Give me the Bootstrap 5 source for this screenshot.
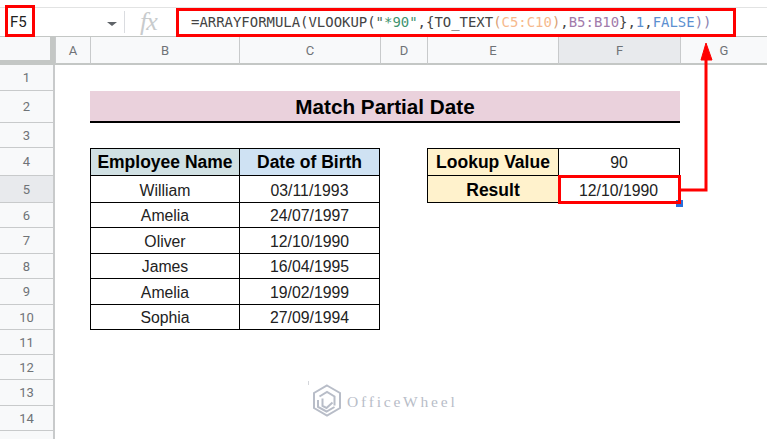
<!DOCTYPE html>
<html lang="en">
<head>
<meta charset="utf-8">
<title>Match Partial Date</title>
<link rel="stylesheet" href="https://cdn.jsdelivr.net/npm/bootstrap@5.3.0/dist/css/bootstrap.min.css">
<style>
html,body{margin:0;height:439px;overflow:hidden;background:#fff}
.sheet-app{position:relative;width:767px;height:439px;overflow:hidden;padding-top:7px;font-family:"Liberation Sans",Arial,sans-serif;color:#000}
.fbar{height:30px;border-top:1px solid #e2e3e3;border-bottom:1px solid #c4c7c5;background:#fff}
.namebox{width:125px;padding-left:10px;font:15px "Roboto",sans-serif;color:#222;border-right:1px solid #dadce0;height:22px}
.namebox .drop{width:0;height:0;border-left:5px solid transparent;border-right:5px solid transparent;border-top:4px solid #5f6368;margin-right:7px;margin-top:3px}
.fxbox{width:51px;font:italic 26px "Liberation Serif",serif;color:#c8cbcd;padding-left:15px;letter-spacing:-1px;line-height:1}
.ftext{font:13.95px "DejaVu Sans Mono",monospace;color:#444;padding-left:15px;white-space:pre}
.c-q{color:#4a6b5a}.c-str{color:#3f9470}.c-a{color:#f6b98d}.c-ap{color:#d9a074}.c-b{color:#a27bab}.c-n{color:#5b8fd0}.c-p{color:#8a7fb0}
.grid{table-layout:fixed;border-collapse:separate;border-spacing:0;width:767px}
.c0{width:55px}.c1{width:35px}.c2{width:149px}.c3{width:141px}.c4{width:47px}.c5{width:131px}.c6{width:122px}
.grid th{background:#f8f9fa;font:400 13px "Roboto",sans-serif;color:#6f7377;text-align:center;padding:0;vertical-align:middle;overflow:hidden}
.grid thead th{height:28px;border-bottom:2px solid #c4c7c5;border-left:1px solid #c8cacb}
.grid thead th.corner{border-left:0;border-right:5px solid #c4c7c5;border-bottom:5px solid #c4c7c5}
.grid tbody th{border-right:2px solid #c8cacb;border-bottom:1px solid #c8cacb}
.grid th.sel{background:#e8eaed}
.grid td{padding:2px 0 0;text-align:center;vertical-align:middle;font-size:15.8px;color:#222;overflow:hidden;white-space:nowrap;line-height:1}
.h25{height:25px}.h26{height:26px}.h27{height:27px}.h28{height:28px}.h32{height:32px}
.grid tr.h27 td{padding-top:4px}
.grid td.ttl{background:#ead1dc;border-bottom:2px solid #000;font-weight:700;font-size:20.7px;color:#000;padding-top:2px}
.grid td.bl{border-left:1px solid #000}
.grid td.br{border-right:1px solid #000}
.grid td.bt{border-top:1px solid #000}
.grid td.bb{border-bottom:1px solid #000}
.grid td.hd{font-weight:700;color:#000;font-size:17.5px}
.hd-g{background:#d0e0e3}
.hd-b{background:#cfe2f3}
.hd-y{background:#fff2cc}
.ovr{position:absolute;pointer-events:none}
.ovr-all{left:0;top:0}
.ovr-name{left:5px;top:5px;width:30px;height:32px;border:3px solid #f00}
.ovr-f{left:176px;top:8px;width:560px;height:29px;border:3px solid #f00}
.ovr-cell{left:558px;top:175px;width:123px;height:29px;border:3px solid #f00}
.handle{position:absolute;left:676px;top:200px;width:7px;height:7px;background:#2a6fdb}
.wm{position:absolute;left:312px;top:384px;display:flex;align-items:center;gap:5px;color:#b8bdc8;font:15.5px "Liberation Serif",serif;letter-spacing:2.8px}
.wm svg{flex:none}
.wm span{padding-top:2px}
.tick{position:absolute;left:308px;top:381px;width:1px;height:4px;background:#d4d6db}
</style>
</head>
<body>
<div class="sheet-app">
  <div class="fbar d-flex align-items-center">
    <div class="namebox d-flex align-items-center justify-content-between"><span>F5</span><span class="drop"></span></div>
    <div class="fxbox">fx</div>
    <div class="ftext flex-grow-1">=ARRAYFORMULA(VLOOKUP(<span class="c-q">"</span><span class="c-str">*90"</span>,{TO_TEXT<span class="c-ap">(</span><span class="c-a">C5:C10</span><span class="c-ap">)</span>,<span class="c-b">B5:B10</span>},<span class="c-n">1</span>,<span class="c-n">FALSE</span><span class="c-p">))</span></div>
  </div>
  <table class="grid">
    <colgroup><col class="c0"><col class="c1"><col class="c2"><col class="c3"><col class="c4"><col class="c5"><col class="c6"><col></colgroup>
    <thead><tr><th class="corner"></th><th>A</th><th>B</th><th>C</th><th>D</th><th>E</th><th class="sel">F</th><th>G</th></tr></thead>
    <tbody>
      <tr class="h26"><th>1</th><td colspan="7"></td></tr>
      <tr class="h32"><th>2</th><td></td><td colspan="5" class="ttl">Match Partial Date</td><td></td></tr>
      <tr class="h25"><th>3</th><td colspan="7"></td></tr>
      <tr class="h28"><th>4</th><td></td><td class="bl bt bb hd hd-g">Employee Name</td><td class="bl br bt bb hd hd-b">Date of Birth</td><td></td><td class="bl bt bb hd hd-y">Lookup Value</td><td class="bl br bt bb">90</td><td></td></tr>
      <tr class="h27"><th class="sel">5</th><td></td><td class="bl bb">William</td><td class="bl br bb">03/11/1993</td><td></td><td class="bl bb hd hd-y">Result</td><td class="br bb">12/10/1990</td><td></td></tr>
      <tr class="h25"><th>6</th><td></td><td class="bl bb">Amelia</td><td class="bl br bb">24/07/1997</td><td colspan="4"></td></tr>
      <tr class="h26"><th>7</th><td></td><td class="bl bb">Oliver</td><td class="bl br bb">12/10/1990</td><td colspan="4"></td></tr>
      <tr class="h25"><th>8</th><td></td><td class="bl bb">James</td><td class="bl br bb">16/04/1995</td><td colspan="4"></td></tr>
      <tr class="h26"><th>9</th><td></td><td class="bl bb">Amelia</td><td class="bl br bb">19/02/1999</td><td colspan="4"></td></tr>
      <tr class="h25"><th>10</th><td></td><td class="bl bb">Sophia</td><td class="bl br bb">27/09/1994</td><td colspan="4"></td></tr>
      <tr class="h25"><th>11</th><td colspan="7"></td></tr>
      <tr class="h25"><th>12</th><td colspan="7"></td></tr>
      <tr class="h26"><th>13</th><td colspan="7"></td></tr>
      <tr class="h25"><th>14</th><td colspan="7"></td></tr>
      <tr class="h25"><th>15</th><td colspan="7"></td></tr>
    </tbody>
  </table>
  <div class="handle"></div>
  <div class="ovr ovr-name"></div>
  <div class="ovr ovr-f"></div>
  <div class="ovr ovr-cell"></div>
  <svg class="ovr ovr-all" width="767" height="439" viewBox="0 0 767 439"><path d="M680 190H706V56" fill="none" stroke="#f00" stroke-width="3"/><path d="M701 60L706 43L712 60Z" fill="#f00" stroke="#f00" stroke-width="1"/></svg>
  <div class="tick"></div>
  <div class="wm">
    <svg width="30" height="33" viewBox="0 0 30 33" fill="none" stroke="#b8bdc8" stroke-width="2"><path d="M15 1.5L28 9V24L15 31.5L2 24V9Z"/><path d="M7.5 12.5L15 8L22.5 12.5V21.5"/><path d="M6 16V23L14.5 27.5L22.5 23"/><path d="M10.5 14.5V22L14.5 24L20.5 18.5"/></svg>
    <span>OfficeWheel</span>
  </div>
</div>
</body>
</html>
